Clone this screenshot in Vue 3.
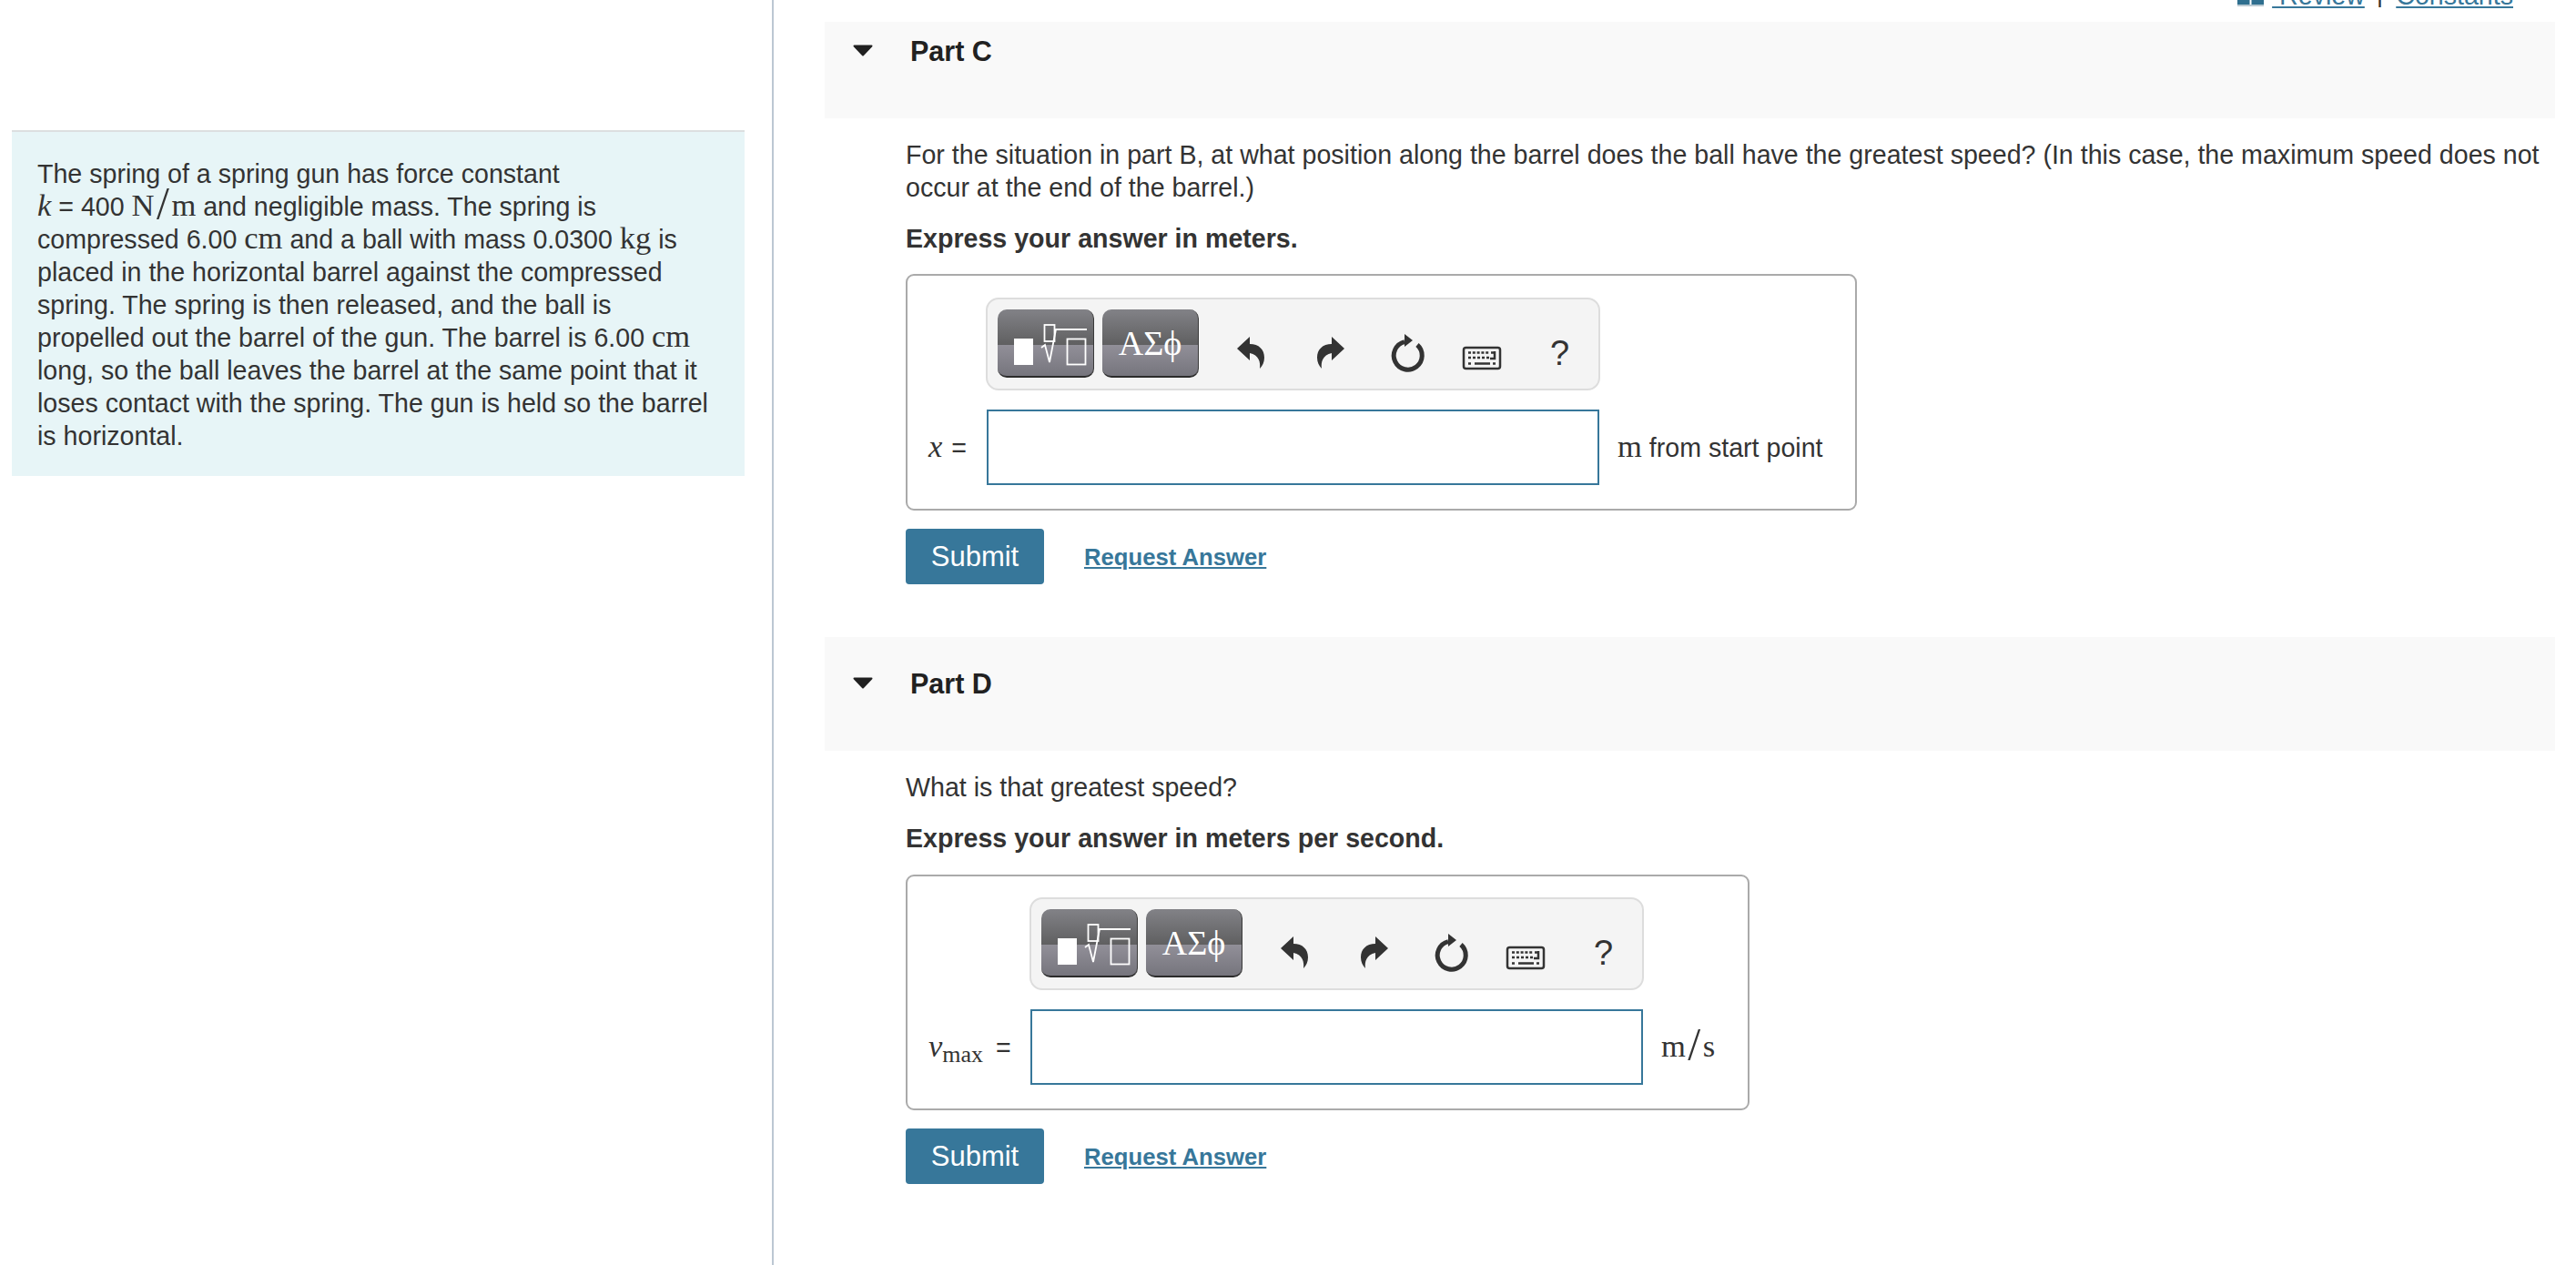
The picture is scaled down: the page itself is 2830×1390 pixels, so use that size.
<script setup>
const parts = [
  {
    id: 'c',
    title: 'Part C',
    question: 'For the situation in part B, at what position along the barrel does the ball have the greatest speed? (In this case, the maximum speed does not occur at the end of the barrel.)',
    instruction: 'Express your answer in meters.',
  },
  {
    id: 'd',
    title: 'Part D',
    question: 'What is that greatest speed?',
    instruction: 'Express your answer in meters per second.',
  },
]
</script>

<template>
  <div class="page">
    <aside class="left">
      <div class="intro">
        The spring of a spring gun has force constant
        <span class="nb"><i class="mi">k</i> = 400 <span class="mr">N<span class="slash">/</span>m</span></span>
        and negligible mass. The spring is compressed 6.00 <span class="mr">cm</span> and a ball with mass 0.0300 <span class="mr">kg</span> is placed in the horizontal barrel against the compressed spring. The spring is then released, and the ball is propelled out the barrel of the gun. The barrel is 6.00 <span class="mr">cm</span> long, so the ball leaves the barrel at the same point that it loses contact with the spring. The gun is held so the barrel is horizontal.
      </div>
    </aside>

    <main class="right">
      <div class="top-links">
        <svg class="book" viewBox="0 0 29 30" width="29" height="30">
          <rect x="0" y="0" width="13.5" height="28" fill="#2f6f8f" />
          <rect x="15.5" y="0" width="13.5" height="28" fill="#2f6f8f" />
          <rect x="0" y="28" width="29" height="2" fill="#b9c9d2" />
        </svg>
        <a class="link" href="#">&nbsp;Review</a>
        <span class="sep">|</span>
        <a class="link" href="#">Constants</a>
      </div>

      <section v-for="part in parts" :key="part.id" class="part" :class="'part-' + part.id">
        <header class="part-head">
          <svg class="caret" viewBox="0 0 22 13" width="22" height="13">
            <path d="M1.5 1.5H20.5L11 11.5Z" fill="#212121" stroke="#212121" stroke-width="2" stroke-linejoin="round" />
          </svg>
          <h2>{{ part.title }}</h2>
        </header>

        <div class="part-body">
          <p class="question">{{ part.question }}</p>
          <p class="instruction">{{ part.instruction }}</p>

          <div class="answer">
            <div class="toolbar">
              <button class="tpl" type="button" aria-label="Templates">
                <svg viewBox="0 0 106 75" width="106" height="75">
                  <rect x="18" y="32" width="21" height="29" fill="#fff" />
                  <rect x="51.5" y="17" width="11" height="18" fill="none" stroke="#fff" stroke-width="1.8" />
                  <path d="M48 42L52 39L57 58L64 22H98" fill="none" stroke="#fff" stroke-width="1.8" />
                  <rect x="76.5" y="32.5" width="20" height="28" fill="none" stroke="#fff" stroke-width="1.8" />
                </svg>
              </button>
              <button class="tpl sym" type="button">ΑΣϕ</button>

              <span class="slot">
                <svg viewBox="0 0 85 75" width="85" height="75">
                  <path transform="translate(27 30)" d="M0 13L14 0V8C24 8 30 14 30 23C30 28 28 32 25 35C26 28 24 20 14 18V26Z" fill="#333" />
                </svg>
              </span>
              <span class="slot">
                <svg viewBox="0 0 85 75" width="85" height="75">
                  <path transform="translate(60 30) scale(-1 1)" d="M0 13L14 0V8C24 8 30 14 30 23C30 28 28 32 25 35C26 28 24 20 14 18V26Z" fill="#333" />
                </svg>
              </span>
              <span class="slot">
                <svg viewBox="0 0 85 75" width="85" height="75">
                  <path d="M55 39A15.5 15.5 0 1 1 41 35.600" fill="none" stroke="#333" stroke-width="5" />
                  <path d="M41 27L50 34L41 41Z" fill="#333" />
                </svg>
              </span>
              <span class="slot">
                <svg viewBox="0 0 85 75" width="85" height="75">
                  <rect x="21" y="42" width="40" height="23" rx="2.500" fill="none" stroke="#333" stroke-width="2.500" />
                  <path d="M26 47.500H49M51 47.500H56" fill="none" stroke="#333" stroke-width="2.500" stroke-dasharray="3 1.800" />
                  <path d="M26 53H49" fill="none" stroke="#333" stroke-width="2.500" stroke-dasharray="3 2" />
                  <path d="M55 46V54H50" fill="none" stroke="#333" stroke-width="2.500" />
                  <path d="M26 59.500H29M33 59.500H50M53 59.500H56" fill="none" stroke="#333" stroke-width="2.500" />
                </svg>
              </span>
              <span class="slot help">?</span>
            </div>

            <div class="label">
              <template v-if="part.id === 'c'"><i class="mi var">x</i> =</template>
              <template v-else><i class="mi">v</i><sub class="mr">max</sub><span class="eq">=</span></template>
            </div>
            <div class="input"></div>
            <div class="unit">
              <template v-if="part.id === 'c'"><span class="mr">m</span> from start point</template>
              <span v-else class="mr">m<span class="slash">/</span>s</span>
            </div>
          </div>

          <div class="actions">
            <button class="submit" type="button">Submit</button>
            <a class="request" href="#">Request Answer</a>
          </div>
        </div>
      </section>
    </main>
  </div>
</template>

<style>
html, body { margin: 0; background: #fff; }
</style>

<style scoped>
.page {
  display: flex;
  height: 1390px;
  overflow: hidden;
  font-family: "Liberation Sans", Arial, sans-serif;
  font-size: 28.6px;
  line-height: 36px;
  color: #333;
  background: #fff;
}
.left {
  box-sizing: border-box;
  flex: 0 0 850px;
  padding: 143px 30px 0 13px;
  border-right: 2px solid #bcc7d3;
}
.intro {
  padding: 28px 28px 26px;
  background: #e7f5f7;
  border-top: 2px solid #dcdfe0;
}
.nb { white-space: nowrap; }
.mi { font-family: "Liberation Serif", serif; font-style: italic; font-size: 34.5px; line-height: 0; }
.mr { font-family: "Liberation Serif", serif; font-size: 34.5px; line-height: 0; }
.slash { font-size: 50px; font-weight: 400; margin: 0 2.500px; line-height: 0; vertical-align: -3px; }
.var { margin-right: 2px; }

.right {
  flex: 1;
  min-width: 0;
  padding-right: 23px;
  padding-left: 56px;
}
.top-links {
  box-sizing: border-box;
  display: flex;
  justify-content: flex-end;
  align-items: flex-end;
  height: 24px;
  padding: 0 46px 11px 0;
}
.book { margin: 0 9px 6px 0; flex: none; }
.link { color: #37779a; text-decoration: underline; }
.sep { margin: 0 14px 3px 13px; color: #333; }

.part-head {
  display: flex;
  align-items: flex-start;
  height: 106px;
  box-sizing: border-box;
  padding: 14px 0 0 31px;
  background: #f9f9f9;
}
.part-d { margin-top: 58px; }
.part-d .part-head { height: 125px; padding-top: 33px; }
.caret { margin: 11px 41px 0 0; flex: none; }
.part-head h2 { margin: 0; font-size: 30.5px; line-height: 36px; font-weight: 700; color: #212121; }

.part-body { padding: 22px 0 0 89px; }
.question { margin: 0; }
.instruction { margin: 20px 0 0; font-weight: 700; }

.answer {
  display: grid;
  grid-template-columns: 64px 674px auto;
  align-items: center;
  row-gap: 21px;
  width: fit-content;
  box-sizing: border-box;
  margin-top: 21px;
  padding: 24px 36px 26px 23px;
  border: 2px solid #aaa;
  border-radius: 9px;
}
.part-d .answer {
  grid-template-columns: 112px 674px auto;
  margin-top: 22px;
  padding-top: 23px;
  padding-bottom: 26px;
}

.toolbar {
  grid-column: 2 / 4;
  display: flex;
  align-items: flex-start;
  box-sizing: border-box;
  width: 675px;
  height: 102px;
  margin-left: -1px;
  padding: 11px 0 0 11px;
  background: #f4f4f4;
  border: 2px solid #ddd;
  border-radius: 14px;
}
.tpl {
  flex: none;
  box-sizing: border-box;
  width: 106px;
  height: 75px;
  padding: 0;
  border: 0;
  border-bottom: 2px solid #2b2b2b;
  border-right: 1px solid #3a3a3a;
  border-radius: 10px;
  background: linear-gradient(#828287 0%, #5f5f60 54%, #918f98 54%, #76757d 100%);
  color: #fff;
  overflow: hidden;
}
.tpl svg { display: block; margin-top: 0; }
.sym {
  margin-left: 9px;
  font-family: "Liberation Serif", serif;
  font-size: 38px;
  line-height: 60px;
}
.slot { flex: none; width: 85px; height: 75px; }
.slot svg { display: block; }
.tpl + .slot { margin-left: 15px; }
.help {
  margin-left: -1px;
  text-align: center;
  font-size: 38px;
  line-height: 42px;
  padding-top: 27px;
  box-sizing: border-box;
  color: #333;
}
.label { white-space: nowrap; }
.label sub { font-size: 26px; vertical-align: -6px; line-height: 0; }
.eq { margin-left: 14px; }
.input {
  box-sizing: border-box;
  width: 673px;
  height: 83px;
  border: 2px solid #37779a;
  background: #fff;
}
.unit { margin-left: 19px; white-space: nowrap; }

.actions {
  display: flex;
  align-items: center;
  gap: 44px;
  margin-top: 20px;
}
.submit {
  box-sizing: border-box;
  width: 152px;
  height: 61px;
  padding: 0;
  border: 0;
  border-radius: 4px;
  background: #37779a;
  color: #fff;
  font-family: inherit;
  font-size: 31px;
}
.request {
  color: #37779a;
  font-size: 25.7px;
  font-weight: 700;
  text-decoration: underline;
}
</style>
